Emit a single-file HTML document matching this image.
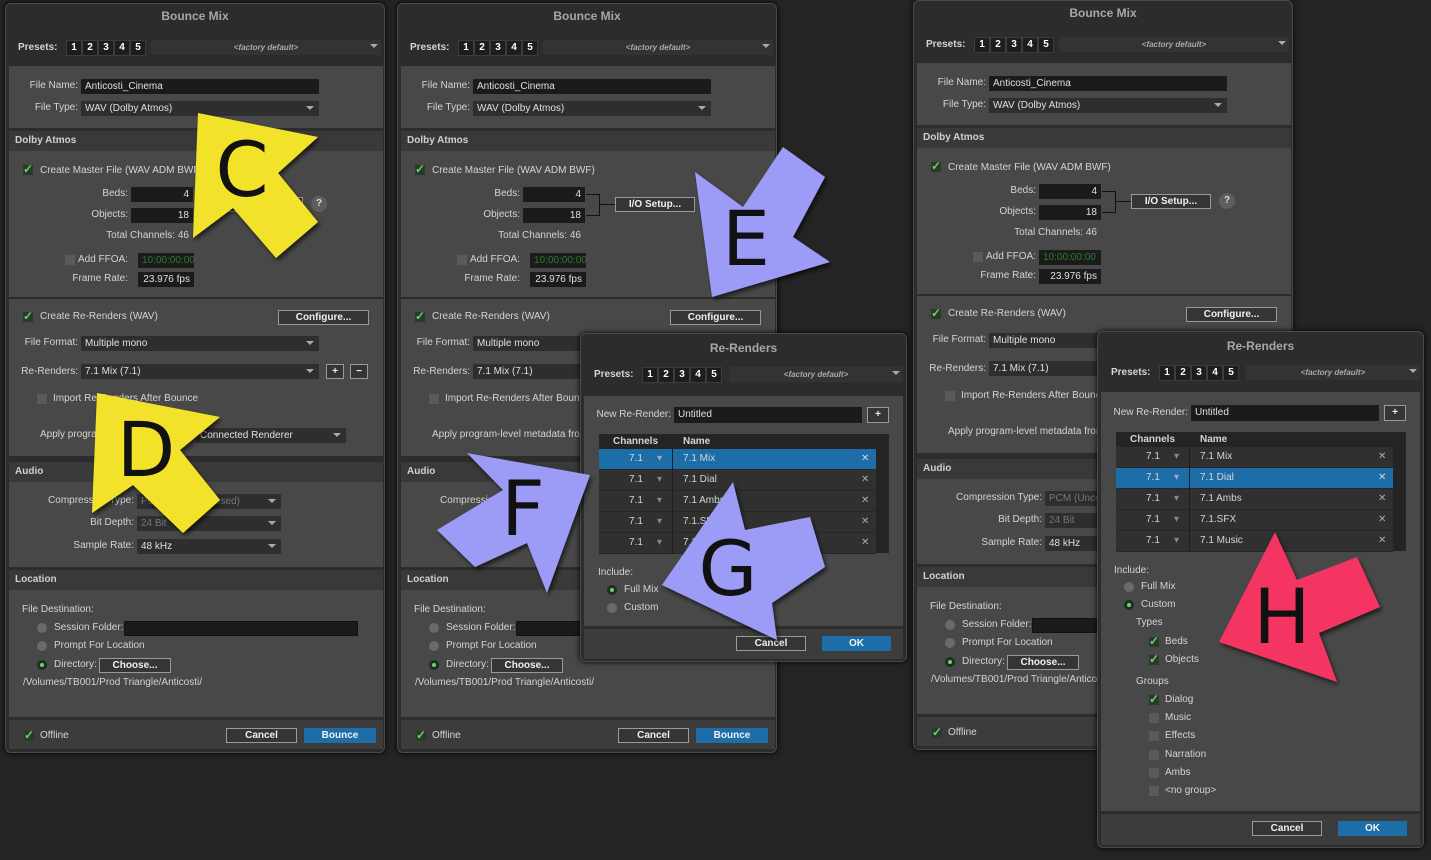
<!DOCTYPE html>
<html><head><meta charset="utf-8"><style>
*{margin:0;padding:0;box-sizing:border-box}
body{width:1431px;height:860px;background:#242424;position:relative;overflow:hidden;font-family:"Liberation Sans",Arial,sans-serif;font-size:10px;color:#d4d4d4}
.d{position:absolute;background:#2c2c2c;border:1px solid #4a4a4a;border-radius:6px;box-shadow:0 0 6px #000}
.d *{position:absolute}
.tt{left:0;right:0;text-align:center;font-weight:bold;font-size:12px;color:#a8a8a8}
.t{height:12px;line-height:12px;white-space:nowrap}
.r{text-align:right}
.b{font-weight:bold}
.p{background:#484848}
.h{background:#393939;font-weight:bold;color:#d0d0d0;padding-left:6px;line-height:20px;height:20px}
.f{background:#1b1b1b;height:15px;line-height:15px;padding:0 4px;color:#e0e0e0;white-space:nowrap;overflow:hidden}
.dd{background:#2e2e2e}
.dd:after{content:"";position:absolute;right:5px;top:5px;border:4px solid transparent;border-top:4px solid #aaa;border-bottom:0}
.cb{width:10px;height:10px;background:#5a5a5a}
.ck{background:#2a3a2a}
.ck:after{content:"✓";position:absolute;left:0;top:-3px;color:#6ad06a;font-size:12px;font-weight:bold}
.rb{width:10px;height:10px;border-radius:50%;background:#6a6a6a}
.ro{background:#1e2e1e}
.ro:after{content:"";position:absolute;left:3px;top:3px;width:4px;height:4px;border-radius:50%;background:#6cd36c}
.bt{border:1px solid #9a9a9a;background:#353535;text-align:center;font-weight:bold;color:#f0f0f0;height:15px;line-height:13px}
.bl{background:#1d6ea8;border-color:#1d6ea8}
.pb{top:36px;height:16px;width:16px;background:#1d1d1d;border:1px solid #3c3c3c;color:#fff;font-weight:bold;text-align:center;line-height:14px}
.fd{background:#333;height:15px;text-align:center;font-style:italic;font-weight:bold;font-size:8px;color:#aaa;line-height:15px}
.fd:after{content:"";position:absolute;right:3px;top:4px;border:4px solid transparent;border-top:4px solid #aaa;border-bottom:0}
.tb{background:#2a2a2a}
.row{left:0;width:277px;height:21px;background:#303030;border-bottom:1px solid #262626}
.row span{position:absolute;top:4px}
.sel{background:#1d6ea8}
</style></head><body>

<!-- Bounce dialog 1 -->
<div class="d" style="left:5px;top:3px;width:380px;height:750px">
<div class="tt" style="top:5px">Bounce Mix</div>
<div class="t b" style="left:12px;top:38px">Presets:</div>
<div class="pb" style="left:60px">1</div><div class="pb" style="left:76px">2</div><div class="pb" style="left:92px">3</div><div class="pb" style="left:108px">4</div><div class="pb" style="left:124px">5</div>
<div class="fd" style="left:145px;top:36px;width:230px">&lt;factory default&gt;</div>
<div class="p" style="left:3px;top:62px;width:374px;height:62px"></div>
<div class="t r" style="left:0;width:72px;top:76px">File Name:</div><div class="f" style="left:75px;top:75px;width:238px">Anticosti_Cinema</div>
<div class="t r" style="left:0;width:72px;top:98px">File Type:</div><div class="f dd" style="left:75px;top:97px;width:238px">WAV (Dolby Atmos)</div>
<div class="h" style="left:3px;top:127px;width:374px">Dolby Atmos</div>
<div class="p" style="left:3px;top:147px;width:374px;height:146px"></div>
<div class="cb ck" style="left:17px;top:161px"></div><div class="t" style="left:34px;top:161px">Create Master File (WAV ADM BWF)</div>
<div class="t r" style="left:0;width:122px;top:184px">Beds:</div><div class="f r" style="left:125px;top:183px;width:62px">4</div>
<div class="t r" style="left:0;width:122px;top:205px">Objects:</div><div class="f r" style="left:125px;top:204px;width:62px">18</div>
<div class="t r" style="left:0;width:183px;top:226px">Total Channels: 46</div>
<div class="bt" style="left:217px;top:193px;width:80px">I/O Setup...</div>
<div style="left:305px;top:192px;width:16px;height:16px;border-radius:50%;background:#5e5e5e;color:#ddd;text-align:center;line-height:16px;font-weight:bold">?</div>
<div class="cb" style="left:59px;top:251px"></div><div class="t r" style="left:0;width:122px;top:250px">Add FFOA:</div><div class="f" style="left:132px;top:249px;width:56px;color:#2e7a2e">10:00:00:00</div>
<div class="t r" style="left:0;width:122px;top:269px">Frame Rate:</div><div class="f r" style="left:132px;top:268px;width:56px">23.976 fps</div>
<div class="p" style="left:3px;top:295px;width:374px;height:157px"></div>
<div class="cb ck" style="left:17px;top:308px"></div><div class="t" style="left:34px;top:307px">Create Re-Renders (WAV)</div>
<div class="bt" style="left:272px;top:306px;width:91px">Configure...</div>
<div class="t r" style="left:0;width:72px;top:333px">File Format:</div><div class="f dd" style="left:75px;top:332px;width:238px">Multiple mono</div>
<div class="t r" style="left:0;width:72px;top:362px">Re-Renders:</div><div class="f dd" style="left:75px;top:360px;width:238px">7.1 Mix (7.1)</div>
<div class="bt" style="left:320px;top:360px;width:18px">+</div><div class="bt" style="left:344px;top:360px;width:18px">−</div>
<div class="cb" style="left:31px;top:390px"></div><div class="t" style="left:47px;top:389px">Import Re-Renders After Bounce</div>
<div class="t" style="left:34px;top:425px">Apply program-level metadata from</div><div class="f dd" style="left:190px;top:424px;width:150px">Connected Renderer</div>
<div class="h" style="left:3px;top:458px;width:374px">Audio</div>
<div class="p" style="left:3px;top:478px;width:374px;height:85px"></div>
<div class="t r" style="left:0;width:128px;top:491px">Compression Type:</div><div class="f dd" style="left:131px;top:490px;width:144px;color:#777">PCM (Uncompressed)</div>
<div class="t r" style="left:0;width:128px;top:513px">Bit Depth:</div><div class="f dd" style="left:131px;top:512px;width:144px;color:#777">24 Bit</div>
<div class="t r" style="left:0;width:128px;top:536px">Sample Rate:</div><div class="f dd" style="left:131px;top:535px;width:144px">48 kHz</div>
<div class="h" style="left:3px;top:566px;width:374px">Location</div>
<div class="p" style="left:3px;top:586px;width:374px;height:127px"></div>
<div class="t" style="left:16px;top:600px">File Destination:</div>
<div class="rb" style="left:31px;top:619px"></div><div class="t" style="left:48px;top:618px">Session Folder:</div><div class="f" style="left:118px;top:617px;width:234px;border:1px solid #111"></div>
<div class="rb" style="left:31px;top:637px"></div><div class="t" style="left:48px;top:636px">Prompt For Location</div>
<div class="rb ro" style="left:31px;top:656px"></div><div class="t" style="left:48px;top:655px">Directory:</div><div class="bt" style="left:93px;top:654px;width:72px">Choose...</div>
<div class="t" style="left:17px;top:673px">/Volumes/TB001/Prod Triangle/Anticosti/</div>
<div style="left:3px;top:716px;width:374px;height:29px;background:#3c3c3c"></div>
<div class="cb ck" style="left:18px;top:727px"></div><div class="t" style="left:34px;top:726px">Offline</div>
<div class="bt" style="left:220px;top:724px;width:71px">Cancel</div><div class="bt bl" style="left:298px;top:724px;width:72px">Bounce</div>
</div>

<!-- Bounce dialog 2 -->
<div class="d" style="left:397px;top:3px;width:380px;height:750px">
<div class="tt" style="top:5px">Bounce Mix</div>
<div class="t b" style="left:12px;top:38px">Presets:</div>
<div class="pb" style="left:60px">1</div><div class="pb" style="left:76px">2</div><div class="pb" style="left:92px">3</div><div class="pb" style="left:108px">4</div><div class="pb" style="left:124px">5</div>
<div class="fd" style="left:145px;top:36px;width:230px">&lt;factory default&gt;</div>
<div class="p" style="left:3px;top:62px;width:374px;height:62px"></div>
<div class="t r" style="left:0;width:72px;top:76px">File Name:</div><div class="f" style="left:75px;top:75px;width:238px">Anticosti_Cinema</div>
<div class="t r" style="left:0;width:72px;top:98px">File Type:</div><div class="f dd" style="left:75px;top:97px;width:238px">WAV (Dolby Atmos)</div>
<div class="h" style="left:3px;top:127px;width:374px">Dolby Atmos</div>
<div class="p" style="left:3px;top:147px;width:374px;height:146px"></div>
<div class="cb ck" style="left:17px;top:161px"></div><div class="t" style="left:34px;top:161px">Create Master File (WAV ADM BWF)</div>
<div class="t r" style="left:0;width:122px;top:184px">Beds:</div><div class="f r" style="left:125px;top:183px;width:62px">4</div>
<div class="t r" style="left:0;width:122px;top:205px">Objects:</div><div class="f r" style="left:125px;top:204px;width:62px">18</div>
<div style="left:188px;top:190px;width:14px;height:22px;border:1px solid #111;border-left:0"></div><div style="left:202px;top:200px;width:15px;height:1px;background:#111"></div>
<div class="t r" style="left:0;width:183px;top:226px">Total Channels: 46</div>
<div class="bt" style="left:217px;top:193px;width:80px">I/O Setup...</div>
<div class="cb" style="left:59px;top:251px"></div><div class="t r" style="left:0;width:122px;top:250px">Add FFOA:</div><div class="f" style="left:132px;top:249px;width:56px;color:#2e7a2e">10:00:00:00</div>
<div class="t r" style="left:0;width:122px;top:269px">Frame Rate:</div><div class="f r" style="left:132px;top:268px;width:56px">23.976 fps</div>
<div class="p" style="left:3px;top:295px;width:374px;height:157px"></div>
<div class="cb ck" style="left:17px;top:308px"></div><div class="t" style="left:34px;top:307px">Create Re-Renders (WAV)</div>
<div class="bt" style="left:272px;top:306px;width:91px">Configure...</div>
<div class="t r" style="left:0;width:72px;top:333px">File Format:</div><div class="f dd" style="left:75px;top:332px;width:238px">Multiple mono</div>
<div class="t r" style="left:0;width:72px;top:362px">Re-Renders:</div><div class="f dd" style="left:75px;top:360px;width:238px">7.1 Mix (7.1)</div>
<div class="cb" style="left:31px;top:390px"></div><div class="t" style="left:47px;top:389px">Import Re-Renders After Bounce</div>
<div class="t" style="left:34px;top:425px">Apply program-level metadata from</div>
<div class="h" style="left:3px;top:458px;width:374px">Audio</div>
<div class="p" style="left:3px;top:478px;width:374px;height:85px"></div>
<div class="t r" style="left:0;width:128px;top:491px">Compression Type:</div>
<div class="h" style="left:3px;top:566px;width:374px">Location</div>
<div class="p" style="left:3px;top:586px;width:374px;height:127px"></div>
<div class="t" style="left:16px;top:600px">File Destination:</div>
<div class="rb" style="left:31px;top:619px"></div><div class="t" style="left:48px;top:618px">Session Folder:</div><div class="f" style="left:118px;top:617px;width:234px;border:1px solid #111"></div>
<div class="rb" style="left:31px;top:637px"></div><div class="t" style="left:48px;top:636px">Prompt For Location</div>
<div class="rb ro" style="left:31px;top:656px"></div><div class="t" style="left:48px;top:655px">Directory:</div><div class="bt" style="left:93px;top:654px;width:72px">Choose...</div>
<div class="t" style="left:17px;top:673px">/Volumes/TB001/Prod Triangle/Anticosti/</div>
<div style="left:3px;top:716px;width:374px;height:29px;background:#3c3c3c"></div>
<div class="cb ck" style="left:18px;top:727px"></div><div class="t" style="left:34px;top:726px">Offline</div>
<div class="bt" style="left:220px;top:724px;width:71px">Cancel</div><div class="bt bl" style="left:298px;top:724px;width:72px">Bounce</div>
</div>

<!-- Bounce dialog 3 -->
<div class="d" style="left:913px;top:0px;width:380px;height:750px">
<div class="tt" style="top:5px">Bounce Mix</div>
<div class="t b" style="left:12px;top:38px">Presets:</div>
<div class="pb" style="left:60px">1</div><div class="pb" style="left:76px">2</div><div class="pb" style="left:92px">3</div><div class="pb" style="left:108px">4</div><div class="pb" style="left:124px">5</div>
<div class="fd" style="left:145px;top:36px;width:230px">&lt;factory default&gt;</div>
<div class="p" style="left:3px;top:62px;width:374px;height:62px"></div>
<div class="t r" style="left:0;width:72px;top:76px">File Name:</div><div class="f" style="left:75px;top:75px;width:238px">Anticosti_Cinema</div>
<div class="t r" style="left:0;width:72px;top:98px">File Type:</div><div class="f dd" style="left:75px;top:97px;width:238px">WAV (Dolby Atmos)</div>
<div class="h" style="left:3px;top:127px;width:374px">Dolby Atmos</div>
<div class="p" style="left:3px;top:147px;width:374px;height:146px"></div>
<div class="cb ck" style="left:17px;top:161px"></div><div class="t" style="left:34px;top:161px">Create Master File (WAV ADM BWF)</div>
<div class="t r" style="left:0;width:122px;top:184px">Beds:</div><div class="f r" style="left:125px;top:183px;width:62px">4</div>
<div class="t r" style="left:0;width:122px;top:205px">Objects:</div><div class="f r" style="left:125px;top:204px;width:62px">18</div>
<div style="left:188px;top:190px;width:14px;height:22px;border:1px solid #111;border-left:0"></div><div style="left:202px;top:200px;width:15px;height:1px;background:#111"></div>
<div class="t r" style="left:0;width:183px;top:226px">Total Channels: 46</div>
<div class="bt" style="left:217px;top:193px;width:80px">I/O Setup...</div>
<div style="left:305px;top:192px;width:16px;height:16px;border-radius:50%;background:#5e5e5e;color:#ddd;text-align:center;line-height:16px;font-weight:bold">?</div>
<div class="cb" style="left:59px;top:251px"></div><div class="t r" style="left:0;width:122px;top:250px">Add FFOA:</div><div class="f" style="left:125px;top:249px;width:62px;color:#2e7a2e">10:00:00:00</div>
<div class="t r" style="left:0;width:122px;top:269px">Frame Rate:</div><div class="f r" style="left:125px;top:268px;width:62px">23.976 fps</div>
<div class="p" style="left:3px;top:295px;width:374px;height:157px"></div>
<div class="cb ck" style="left:17px;top:308px"></div><div class="t" style="left:34px;top:307px">Create Re-Renders (WAV)</div>
<div class="bt" style="left:272px;top:306px;width:91px">Configure...</div>
<div class="t r" style="left:0;width:72px;top:333px">File Format:</div><div class="f dd" style="left:75px;top:332px;width:238px">Multiple mono</div>
<div class="t r" style="left:0;width:72px;top:362px">Re-Renders:</div><div class="f dd" style="left:75px;top:360px;width:238px">7.1 Mix (7.1)</div>
<div class="cb" style="left:31px;top:390px"></div><div class="t" style="left:47px;top:389px">Import Re-Renders After Bounce</div>
<div class="t" style="left:34px;top:425px">Apply program-level metadata from</div>
<div class="h" style="left:3px;top:458px;width:374px">Audio</div>
<div class="p" style="left:3px;top:478px;width:374px;height:85px"></div>
<div class="t r" style="left:0;width:128px;top:491px">Compression Type:</div><div class="f dd" style="left:131px;top:490px;width:144px;color:#777">PCM (Uncompressed)</div>
<div class="t r" style="left:0;width:128px;top:513px">Bit Depth:</div><div class="f dd" style="left:131px;top:512px;width:144px;color:#777">24 Bit</div>
<div class="t r" style="left:0;width:128px;top:536px">Sample Rate:</div><div class="f dd" style="left:131px;top:535px;width:144px">48 kHz</div>
<div class="h" style="left:3px;top:566px;width:374px">Location</div>
<div class="p" style="left:3px;top:586px;width:374px;height:127px"></div>
<div class="t" style="left:16px;top:600px">File Destination:</div>
<div class="rb" style="left:31px;top:619px"></div><div class="t" style="left:48px;top:618px">Session Folder:</div><div class="f" style="left:118px;top:617px;width:234px;border:1px solid #111"></div>
<div class="rb" style="left:31px;top:637px"></div><div class="t" style="left:48px;top:636px">Prompt For Location</div>
<div class="rb ro" style="left:31px;top:656px"></div><div class="t" style="left:48px;top:655px">Directory:</div><div class="bt" style="left:93px;top:654px;width:72px">Choose...</div>
<div class="t" style="left:17px;top:673px">/Volumes/TB001/Prod Triangle/Anticosti/</div>
<div style="left:3px;top:716px;width:374px;height:29px;background:#3c3c3c"></div>
<div class="cb ck" style="left:18px;top:727px"></div><div class="t" style="left:34px;top:726px">Offline</div>
</div>

<!-- Re-Renders G -->
<div class="d" style="left:580px;top:333px;width:327px;height:329px">
<div class="tt" style="top:7px">Re-Renders</div>
<div class="t b" style="left:13px;top:35px">Presets:</div>
<div class="pb" style="left:61px;top:33px">1</div><div class="pb" style="left:77px;top:33px">2</div><div class="pb" style="left:93px;top:33px">3</div><div class="pb" style="left:109px;top:33px">4</div><div class="pb" style="left:125px;top:33px">5</div>
<div class="fd" style="left:148px;top:33px;width:174px">&lt;factory default&gt;</div>
<div class="p" style="left:3px;top:62px;width:319px;height:230px"></div>
<div class="t r" style="left:0;width:90px;top:75px">New Re-Render:</div><div class="f" style="left:93px;top:73px;width:188px;height:16px">Untitled</div>
<div class="bt" style="left:286px;top:73px;width:22px;height:16px">+</div>
<div class="tb" style="left:18px;top:100px;width:290px;height:119px;background:#242424">
<div class="b" style="left:14px;top:2px">Channels</div><div class="b" style="left:84px;top:2px">Name</div>
<div class="row sel" style="top:15px"><span style="left:30px">7.1</span><span style="left:58px;color:#9ac">▾</span><span style="left:84px">7.1 Mix</span><span style="left:262px">✕</span></div>
<div class="row" style="top:36px"><span style="left:30px">7.1</span><span style="left:58px;color:#888">▾</span><span style="left:84px">7.1 Dial</span><span style="left:262px;color:#aaa">✕</span></div>
<div class="row" style="top:57px"><span style="left:30px">7.1</span><span style="left:58px;color:#888">▾</span><span style="left:84px">7.1 Ambs</span><span style="left:262px;color:#aaa">✕</span></div>
<div class="row" style="top:78px"><span style="left:30px">7.1</span><span style="left:58px;color:#888">▾</span><span style="left:84px">7.1.SFX</span><span style="left:262px;color:#aaa">✕</span></div>
<div class="row" style="top:99px"><span style="left:30px">7.1</span><span style="left:58px;color:#888">▾</span><span style="left:84px">7.1 Music</span><span style="left:262px;color:#aaa">✕</span></div>
<div style="left:73px;top:15px;width:1px;height:104px;background:#1c1c1c"></div>
</div>
<div class="t" style="left:17px;top:233px">Include:</div>
<div class="rb ro" style="left:26px;top:251px"></div><div class="t" style="left:43px;top:250px">Full Mix</div>
<div class="rb" style="left:26px;top:269px"></div><div class="t" style="left:43px;top:268px">Custom</div>
<div style="left:3px;top:295px;width:319px;height:30px;background:#3c3c3c"></div>
<div class="bt" style="left:155px;top:302px;width:70px">Cancel</div><div class="bt bl" style="left:241px;top:302px;width:69px">OK</div>
</div>

<!-- Re-Renders H -->
<div class="d" style="left:1097px;top:331px;width:327px;height:517px">
<div class="tt" style="top:7px">Re-Renders</div>
<div class="t b" style="left:13px;top:35px">Presets:</div>
<div class="pb" style="left:61px;top:33px">1</div><div class="pb" style="left:77px;top:33px">2</div><div class="pb" style="left:93px;top:33px">3</div><div class="pb" style="left:109px;top:33px">4</div><div class="pb" style="left:125px;top:33px">5</div>
<div class="fd" style="left:148px;top:33px;width:174px">&lt;factory default&gt;</div>
<div class="p" style="left:3px;top:60px;width:319px;height:419px"></div>
<div class="t r" style="left:0;width:90px;top:75px">New Re-Render:</div><div class="f" style="left:93px;top:73px;width:188px;height:16px">Untitled</div>
<div class="bt" style="left:286px;top:73px;width:22px;height:16px">+</div>
<div class="tb" style="left:18px;top:100px;width:290px;height:119px;background:#242424">
<div class="b" style="left:14px;top:2px">Channels</div><div class="b" style="left:84px;top:2px">Name</div>
<div class="row" style="top:15px"><span style="left:30px">7.1</span><span style="left:58px;color:#888">▾</span><span style="left:84px">7.1 Mix</span><span style="left:262px;color:#aaa">✕</span></div>
<div class="row sel" style="top:36px"><span style="left:30px">7.1</span><span style="left:58px;color:#9ac">▾</span><span style="left:84px">7.1 Dial</span><span style="left:262px">✕</span></div>
<div class="row" style="top:57px"><span style="left:30px">7.1</span><span style="left:58px;color:#888">▾</span><span style="left:84px">7.1 Ambs</span><span style="left:262px;color:#aaa">✕</span></div>
<div class="row" style="top:78px"><span style="left:30px">7.1</span><span style="left:58px;color:#888">▾</span><span style="left:84px">7.1.SFX</span><span style="left:262px;color:#aaa">✕</span></div>
<div class="row" style="top:99px"><span style="left:30px">7.1</span><span style="left:58px;color:#888">▾</span><span style="left:84px">7.1 Music</span><span style="left:262px;color:#aaa">✕</span></div>
<div style="left:73px;top:15px;width:1px;height:104px;background:#1c1c1c"></div>
</div>
<div class="t" style="left:16px;top:233px">Include:</div>
<div class="rb" style="left:26px;top:250px"></div><div class="t" style="left:43px;top:249px">Full Mix</div>
<div class="rb ro" style="left:26px;top:268px"></div><div class="t" style="left:43px;top:267px">Custom</div>
<div class="t" style="left:38px;top:285px">Types</div>
<div class="cb ck" style="left:51px;top:305px"></div><div class="t" style="left:67px;top:304px">Beds</div>
<div class="cb ck" style="left:51px;top:323px"></div><div class="t" style="left:67px;top:322px">Objects</div>
<div class="t" style="left:38px;top:344px">Groups</div>
<div class="cb ck" style="left:51px;top:363px"></div><div class="t" style="left:67px;top:362px">Dialog</div>
<div class="cb" style="left:51px;top:381px"></div><div class="t" style="left:67px;top:380px">Music</div>
<div class="cb" style="left:51px;top:399px"></div><div class="t" style="left:67px;top:398px">Effects</div>
<div class="cb" style="left:51px;top:418px"></div><div class="t" style="left:67px;top:417px">Narration</div>
<div class="cb" style="left:51px;top:436px"></div><div class="t" style="left:67px;top:435px">Ambs</div>
<div class="cb" style="left:51px;top:454px"></div><div class="t" style="left:67px;top:453px">&lt;no group&gt;</div>
<div style="left:3px;top:482px;width:319px;height:31px;background:#3c3c3c"></div>
<div class="bt" style="left:154px;top:489px;width:70px">Cancel</div><div class="bt bl" style="left:240px;top:489px;width:69px">OK</div>
</div>

<svg width="1431" height="860" style="position:absolute;left:0;top:0" font-family="DejaVu Sans, Liberation Sans, sans-serif">
<defs><filter id="s"><feDropShadow dx="2" dy="3" stdDeviation="2" flood-color="#000" flood-opacity="0.6"/></filter></defs>
<g filter="url(#s)">
<polygon fill="#f2e32a" points="198,113 318,137 278,173 318,222 276,258 233,208 193,238"/>
<polygon fill="#f2e32a" points="97,393 220,417 180,450 220,500 183,533 133,485 92,513"/>
<polygon fill="#9c9cf6" points="712,297 695,172 743,207 783,147 825,177 793,237 830,262"/>
<polygon fill="#9c9cf6" points="590,475 467,453 503,490 437,530 475,567 527,543 547,593"/>
<polygon fill="#9c9cf6" points="733,482 745,530 810,517 825,567 772,603 777,640 662,585"/>
<polygon fill="#f43462" points="1275,532 1297,580 1357,557 1380,607 1319,633 1337,682 1219,642"/>
</g>
<g font-size="76" fill="#111" text-anchor="middle">
<text x="242" y="196">C</text>
<text x="146" y="476">D</text>
<text x="746" y="265">E</text>
<text x="523" y="535">F</text>
<text x="728" y="595">G</text>
<text x="1282" y="643">H</text>
</g>
</svg>
</body></html>
